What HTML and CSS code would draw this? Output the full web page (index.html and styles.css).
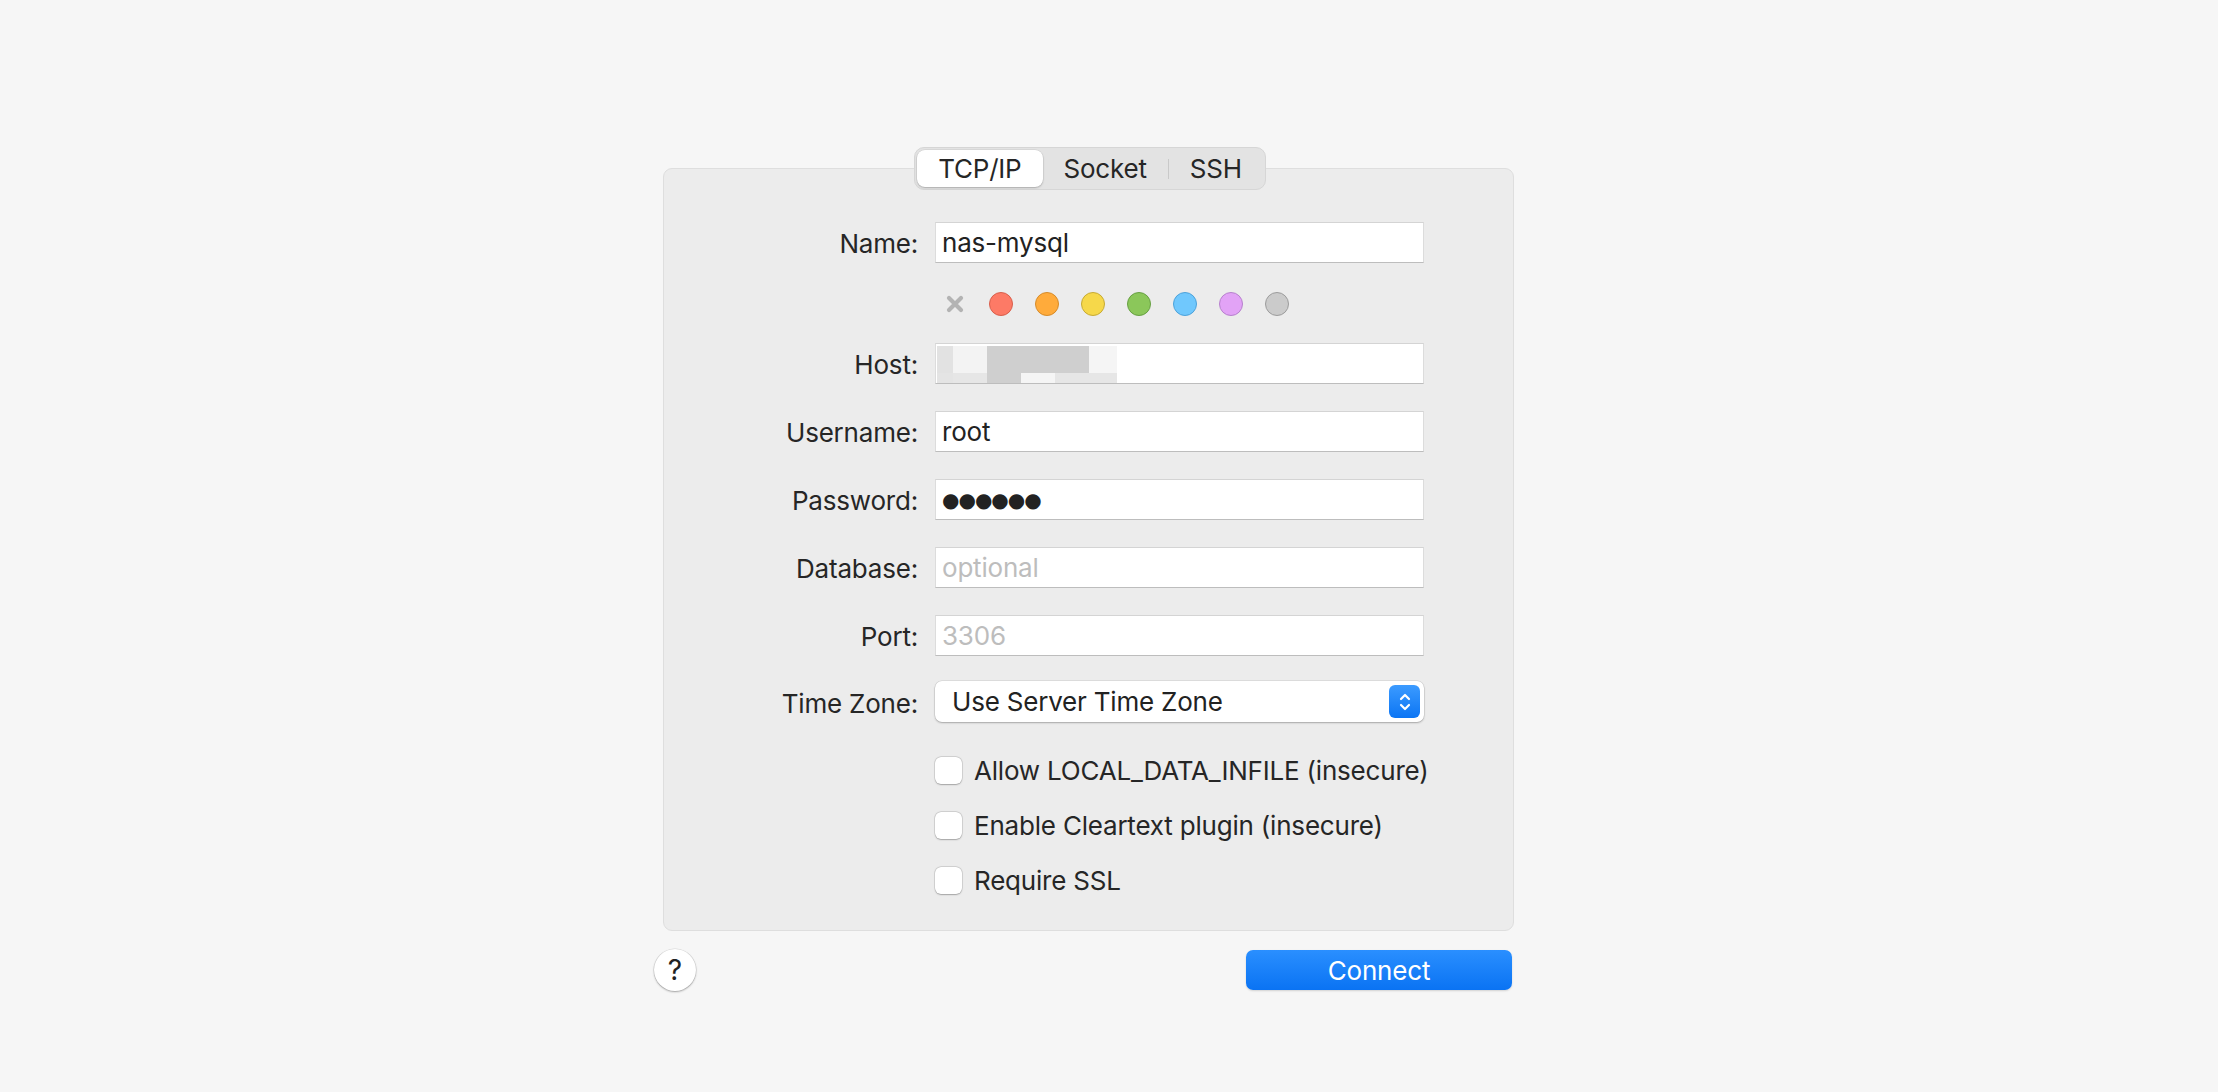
FILE: index.html
```html
<!DOCTYPE html>
<html lang="en">
<head>
  <meta charset="UTF-8" />
  <meta name="viewport" content="width=device-width, initial-scale=1.0"/>
  <title>New Connection</title>
  <link rel="stylesheet" href="styles.css">
</head>
<body>

  <div class="dialog">
    <!-- Connection type tabs -->
    <div class="tabs-wrap">
      <div class="tabs">
        <button class="tab active">TCP/IP</button>
        <button class="tab">Socket</button>
        <span class="tab-sep"></span>
        <button class="tab">SSH</button>
      </div>
    </div>

    <section class="panel">
      <div class="row">
        <label class="label">Name:</label>
        <div class="field">nas-mysql</div>
      </div>

      <div class="row row-dots">
        <span class="label"></span>
        <div class="dots">
          <span class="dot-none">
            <svg width="24" height="24" viewBox="0 0 24 24"><path d="M6 6 L18 18 M18 6 L6 18" stroke="#b3b3b3" stroke-width="4.2" stroke-linecap="round"/></svg>
          </span>
          <span class="dot red"></span>
          <span class="dot orange"></span>
          <span class="dot yellow"></span>
          <span class="dot green"></span>
          <span class="dot blue"></span>
          <span class="dot purple"></span>
          <span class="dot gray"></span>
        </div>
      </div>

      <div class="row">
        <label class="label">Host:</label>
        <div class="field host">
          <div class="blur">
            <div class="bcol"><i class="c1"></i><i class="c5"></i></div>
            <div class="bcol w34"><i class="c6"></i><i class="c4"></i></div>
            <div class="bcol w34"><i class="c2"></i><i class="c2"></i></div>
            <div class="bcol w34"><i class="c2"></i><i class="c7"></i></div>
            <div class="bcol w34"><i class="c2"></i><i class="c4"></i></div>
            <div class="bcol w28"><i class="c7"></i><i class="c4"></i></div>
          </div>
        </div>
      </div>

      <div class="row">
        <label class="label">Username:</label>
        <div class="field">root</div>
      </div>

      <div class="row">
        <label class="label">Password:</label>
        <div class="field secret">●●●●●●</div>
      </div>

      <div class="row">
        <label class="label">Database:</label>
        <div class="field placeholder">optional</div>
      </div>

      <div class="row">
        <label class="label">Port:</label>
        <div class="field placeholder">3306</div>
      </div>

      <div class="row">
        <label class="label">Time Zone:</label>
        <div class="select">
          <span>Use Server Time Zone</span>
          <span class="stepper">
            <svg width="20" height="26" viewBox="0 0 20 26"><path d="M6 10 L10 6 L14 10 M6 16 L10 20 L14 16" fill="none" stroke="#fff" stroke-width="2.2" stroke-linecap="round" stroke-linejoin="round"/></svg>
          </span>
        </div>
      </div>

      <div class="checks">
        <label class="check"><span class="box"></span>Allow LOCAL_DATA_INFILE (insecure)</label>
        <label class="check"><span class="box"></span>Enable Cleartext plugin (insecure)</label>
        <label class="check"><span class="box"></span>Require SSL</label>
      </div>
    </section>

    <footer class="actions">
      <button class="help">?</button>
      <button class="connect">Connect</button>
    </footer>
  </div>

</body>
</html>
```

FILE: styles.css
```css
:root {
  --bg: #f6f6f6;
  --panel: #ececec;
  --text: #262626;
  --muted: #bdbdbd;
  --blue: #1a84ff;
}

* {
  box-sizing: border-box;
  margin: 0;
  padding: 0;
}

body {
  font-family: Inter, "Liberation Sans", sans-serif;
  font-size: 26px;
  letter-spacing: -0.2px;
  background: var(--bg);
  color: var(--text);
  height: 1092px;
  overflow: hidden;
}

.dialog {
  width: 860px;
  margin-left: 654px;
  padding-top: 147px;
}

/* tabs */
.tabs-wrap {
  display: flex;
  justify-content: center;
  padding-left: 12px;
  position: relative;
  z-index: 1;
  margin-bottom: -22px;
}

.tabs {
  display: flex;
  align-items: center;
  height: 43px;
  padding: 2px;
  background: #e3e3e3;
  border: 1px solid #d6d6d6;
  border-radius: 10px;
}

.tab {
  font: inherit;
  letter-spacing: inherit;
  color: var(--text);
  background: transparent;
  border: none;
  height: 37px;
  padding: 0 21px;
  border-radius: 8px;
}

.tab.active {
  background: #fff;
  box-shadow: 0 1px 2px rgba(0,0,0,0.22), 0 0 0 0.5px rgba(0,0,0,0.08);
}

.tab-sep {
  width: 1px;
  height: 20px;
  background: #c9c9c9;
}

/* panel */
.panel {
  margin-left: 9px;
  width: 851px;
  background: var(--panel);
  border: 1px solid #dedede;
  border-radius: 9px;
  padding: 53px 0 33px;
  display: flex;
  flex-direction: column;
  gap: 27px;
}

.row {
  display: grid;
  grid-template-columns: 254px 489px;
  column-gap: 17px;
  align-items: center;
}

.label {
  text-align: right;
  padding-top: 2px;
}

.field {
  height: 41px;
  background: #fff;
  border: 1px solid #dcdcdc;
  border-top-color: #d4d4d4;
  border-bottom-color: #bdbdbd;
  padding: 0 6px;
  display: flex;
  align-items: center;
  color: #222;
}

.field.placeholder {
  color: var(--muted);
}

.field.secret {
  font-family: "DejaVu Sans", sans-serif;
  font-size: 20px;
  letter-spacing: -1px;
  color: #222;
}

.field.host {
  padding: 2px 0 0 1px;
  align-items: stretch;
}

.blur {
  display: flex;
}

.bcol {
  width: 16px;
  display: flex;
  flex-direction: column;
}

.bcol.w34 { width: 34px; }
.bcol.w28 { width: 28px; }

.bcol i {
  display: block;
  height: 27px;
}

.bcol i + i {
  height: 10px;
}

.c1 { background: #e2e2e2; }
.c2 { background: #cfcfcf; }
.c4 { background: #e6e6e6; }
.c5 { background: #e4e4e4; }
.c6 { background: #f3f3f3; }
.c7 { background: #f5f5f5; }

/* color tags */
.row-dots {
  height: 26px;
}

.dots {
  display: flex;
  align-items: center;
  gap: 22px;
  padding-left: 8px;
  padding-top: 2px;
}

.dot-none {
  display: flex;
  width: 24px;
  height: 24px;
}

.dot {
  width: 24px;
  height: 24px;
  border-radius: 50%;
  border: 1.5px solid;
}

.dot.red    { background: #fd7a66; border-color: #d85f4c; }
.dot.orange { background: #ffab3b; border-color: #d68b2a; }
.dot.yellow { background: #f6d84a; border-color: #c6aa35; }
.dot.green  { background: #8bc75a; border-color: #67a043; }
.dot.blue   { background: #70c8fd; border-color: #4da2da; }
.dot.purple { background: #e2a3f6; border-color: #b781cd; }
.dot.gray   { background: #cbcbcb; border-color: #9c9c9c; }

/* select */
.select {
  height: 41px;
  margin-top: -2px;
  background: #fff;
  border-radius: 7px;
  box-shadow: 0 1px 2px rgba(0,0,0,0.25), 0 0 0 0.5px rgba(0,0,0,0.12);
  display: flex;
  align-items: center;
  justify-content: space-between;
  padding: 0 4px 0 17px;
  color: #222;
}

.stepper {
  width: 31px;
  height: 33px;
  border-radius: 6px;
  background: linear-gradient(#3c9bff, #0b75f4);
  display: flex;
  align-items: center;
  justify-content: center;
}

/* checkboxes */
.checks {
  display: flex;
  flex-direction: column;
  gap: 22px;
  padding-left: 271px;
  margin-top: 5px;
}

.check {
  display: flex;
  align-items: center;
  gap: 12px;
  height: 33px;
}

.box {
  width: 27px;
  height: 27px;
  background: #fff;
  border-radius: 6px;
  box-shadow: 0 0.5px 1.5px rgba(0,0,0,0.25), 0 0 0 0.5px rgba(0,0,0,0.15);
}

/* bottom bar */
.actions {
  display: flex;
  justify-content: space-between;
  align-items: center;
  margin-top: 18px;
  padding-right: 2px;
}

.help {
  width: 42px;
  height: 42px;
  border-radius: 50%;
  background: #fff;
  border: none;
  box-shadow: 0 1px 2px rgba(0,0,0,0.3), 0 0 0 0.5px rgba(0,0,0,0.12);
  font: inherit;
  font-size: 28px;
  color: #222;
}

.connect {
  width: 266px;
  height: 40px;
  border: none;
  border-radius: 7px;
  background: linear-gradient(#2a8fff, #0a73f3);
  box-shadow: 0 1px 2px rgba(0,0,0,0.15);
  color: #fff;
  font: inherit;
  letter-spacing: inherit;
}
```
